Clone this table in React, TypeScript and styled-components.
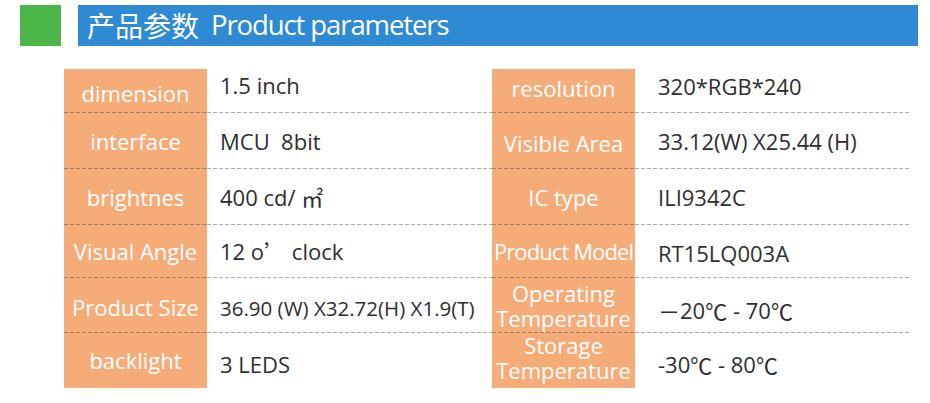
import React from "react";
import styled, { createGlobalStyle, css } from "styled-components";

const GlobalStyle = createGlobalStyle`
  html, body { margin: 0; padding: 0; background: #ffffff; }
  body {
    font-family: "Open Sans", "Noto Sans CJK SC", sans-serif;
    width: 930px;
    height: 403px;
    overflow: hidden;
  }
`;

const Page = styled.div`
  padding: 5px 0 0 20px;
`;

const Header = styled.header`
  display: flex;
  gap: 17px;
  height: 41px;
`;

const GreenMark = styled.div`
  width: 41px;
  height: 41px;
  background: #4cb748;
`;

const TitleBar = styled.div`
  box-sizing: border-box;
  width: 840px;
  height: 41px;
  background: #2e8ad3;
  display: flex;
  align-items: center;
  gap: 12px;
  padding: 0 0 2px 9px;
  color: #ffffff;
`;

const TitleCn = styled.span`
  font-family: "Noto Sans CJK SC", sans-serif;
  font-size: 28px;
  font-weight: 400;
  line-height: 1;
`;

const TitleEn = styled.span`
  font-family: "Open Sans", sans-serif;
  font-size: 27.5px;
  font-weight: 400;
  letter-spacing: -1.1px;
  line-height: 1;
`;

const Sheet = styled.section`
  display: grid;
  grid-template-columns: 143px 285px 143px 275px;
  grid-template-rows: 44px 56px 56px 53px 55px 55px;
  margin: 23px 0 0 44px;
`;

const dashRule = (color: string) => css`
  background-image: repeating-linear-gradient(
    90deg,
    rgba(60, 60, 60, 0.42) 0 4px,
    transparent 4px 6px
  );
  background-position: left bottom;
  background-size: 100% 1px;
  background-repeat: no-repeat;
  background-color: ${color};
`;

type CellProps = { $pt?: number; $pb?: number; $last?: boolean };

const Label = styled.div<CellProps & { $tight?: boolean }>`
  box-sizing: border-box;
  display: flex;
  align-items: center;
  justify-content: center;
  text-align: center;
  color: #ffffff;
  font-size: 22px;
  line-height: 25px;
  white-space: nowrap;
  letter-spacing: ${(p) => (p.$tight ? "-0.9px" : "0")};
  padding-top: ${(p) => p.$pt ?? 0}px;
  padding-bottom: ${(p) => p.$pb ?? 0}px;
  ${(p) => (p.$last ? css`background: #f5ac79;` : dashRule("#f5ac79"))}
`;

const Value = styled.div<CellProps & { $indent: number; $small?: boolean }>`
  box-sizing: border-box;
  display: flex;
  align-items: center;
  color: #2e2e2e;
  font-size: ${(p) => (p.$small ? "20.5px" : "22px")};
  line-height: 25px;
  white-space: pre;
  padding-left: ${(p) => p.$indent}px;
  padding-top: ${(p) => p.$pt ?? 0}px;
  padding-bottom: ${(p) => p.$pb ?? 0}px;
  ${(p) => (p.$last ? css`background: #ffffff;` : dashRule("#ffffff"))}
`;

const Cjk = styled.span`
  font-family: "Noto Sans CJK SC", sans-serif;
  font-weight: 400;
`;

type Spec = {
  label: React.ReactNode;
  value: React.ReactNode;
  lpt?: number;
  lpb?: number;
  vpt?: number;
  vpb?: number;
  tight?: boolean;
  small?: boolean;
};

const leftSpecs: Spec[] = [
  { label: "dimension", value: "1.5 inch", lpt: 4, vpb: 12 },
  { label: "interface", value: "MCU  8bit" },
  {
    label: "brightnes",
    value: (
      <>
        400 cd/ <Cjk>㎡</Cjk>
      </>
    ),
  },
  {
    label: "Visual Angle",
    value: (
      <>
        12 o<Cjk>’</Cjk> clock
      </>
    ),
  },
  { label: "Product Size", value: "36.90 (W) X32.72(H) X1.9(T)", lpt: 3, vpt: 5, small: true },
  { label: "backlight", value: "3 LEDS", vpt: 7 },
];

const rightSpecs: Spec[] = [
  { label: "resolution", value: "320*RGB*240", lpb: 6, vpb: 10 },
  { label: "Visible Area", value: "33.12(W) X25.44 (H)", lpt: 4 },
  { label: "IC type", value: "ILI9342C" },
  { label: "Product Model", value: "RT15LQ003A", tight: true, vpt: 3 },
  {
    label: (
      <>
        Operating
        <br />
        Temperature
      </>
    ),
    value: (
      <>
        <Cjk>－</Cjk>20<Cjk>℃</Cjk> - 70<Cjk>℃</Cjk>
      </>
    ),
    vpt: 9,
  },
  {
    label: (
      <>
        Storage
        <br />
        Temperature
      </>
    ),
    value: (
      <>
        -30<Cjk>℃</Cjk> - 80<Cjk>℃</Cjk>
      </>
    ),
    lpb: 5,
    vpt: 8,
  },
];

export default function App() {
  return (
    <>
      <GlobalStyle />
      <Page>
        <Header>
          <GreenMark />
          <TitleBar>
            <TitleCn>产品参数</TitleCn>
            <TitleEn>Product parameters</TitleEn>
          </TitleBar>
        </Header>
        <Sheet>
          {leftSpecs.map((l, i) => {
            const r = rightSpecs[i];
            const last = i === leftSpecs.length - 1;
            return (
              <React.Fragment key={i}>
                <Label $pt={l.lpt} $pb={l.lpb} $last={last} $tight={l.tight}>
                  {l.label}
                </Label>
                <Value $indent={13} $pt={l.vpt} $pb={l.vpb} $last={last} $small={l.small}>
                  {l.value}
                </Value>
                <Label $pt={r.lpt} $pb={r.lpb} $last={last} $tight={r.tight}>
                  {r.label}
                </Label>
                <Value $indent={23} $pt={r.vpt} $pb={r.vpb} $last={last} $small={r.small}>
                  {r.value}
                </Value>
              </React.Fragment>
            );
          })}
        </Sheet>
      </Page>
    </>
  );
}
